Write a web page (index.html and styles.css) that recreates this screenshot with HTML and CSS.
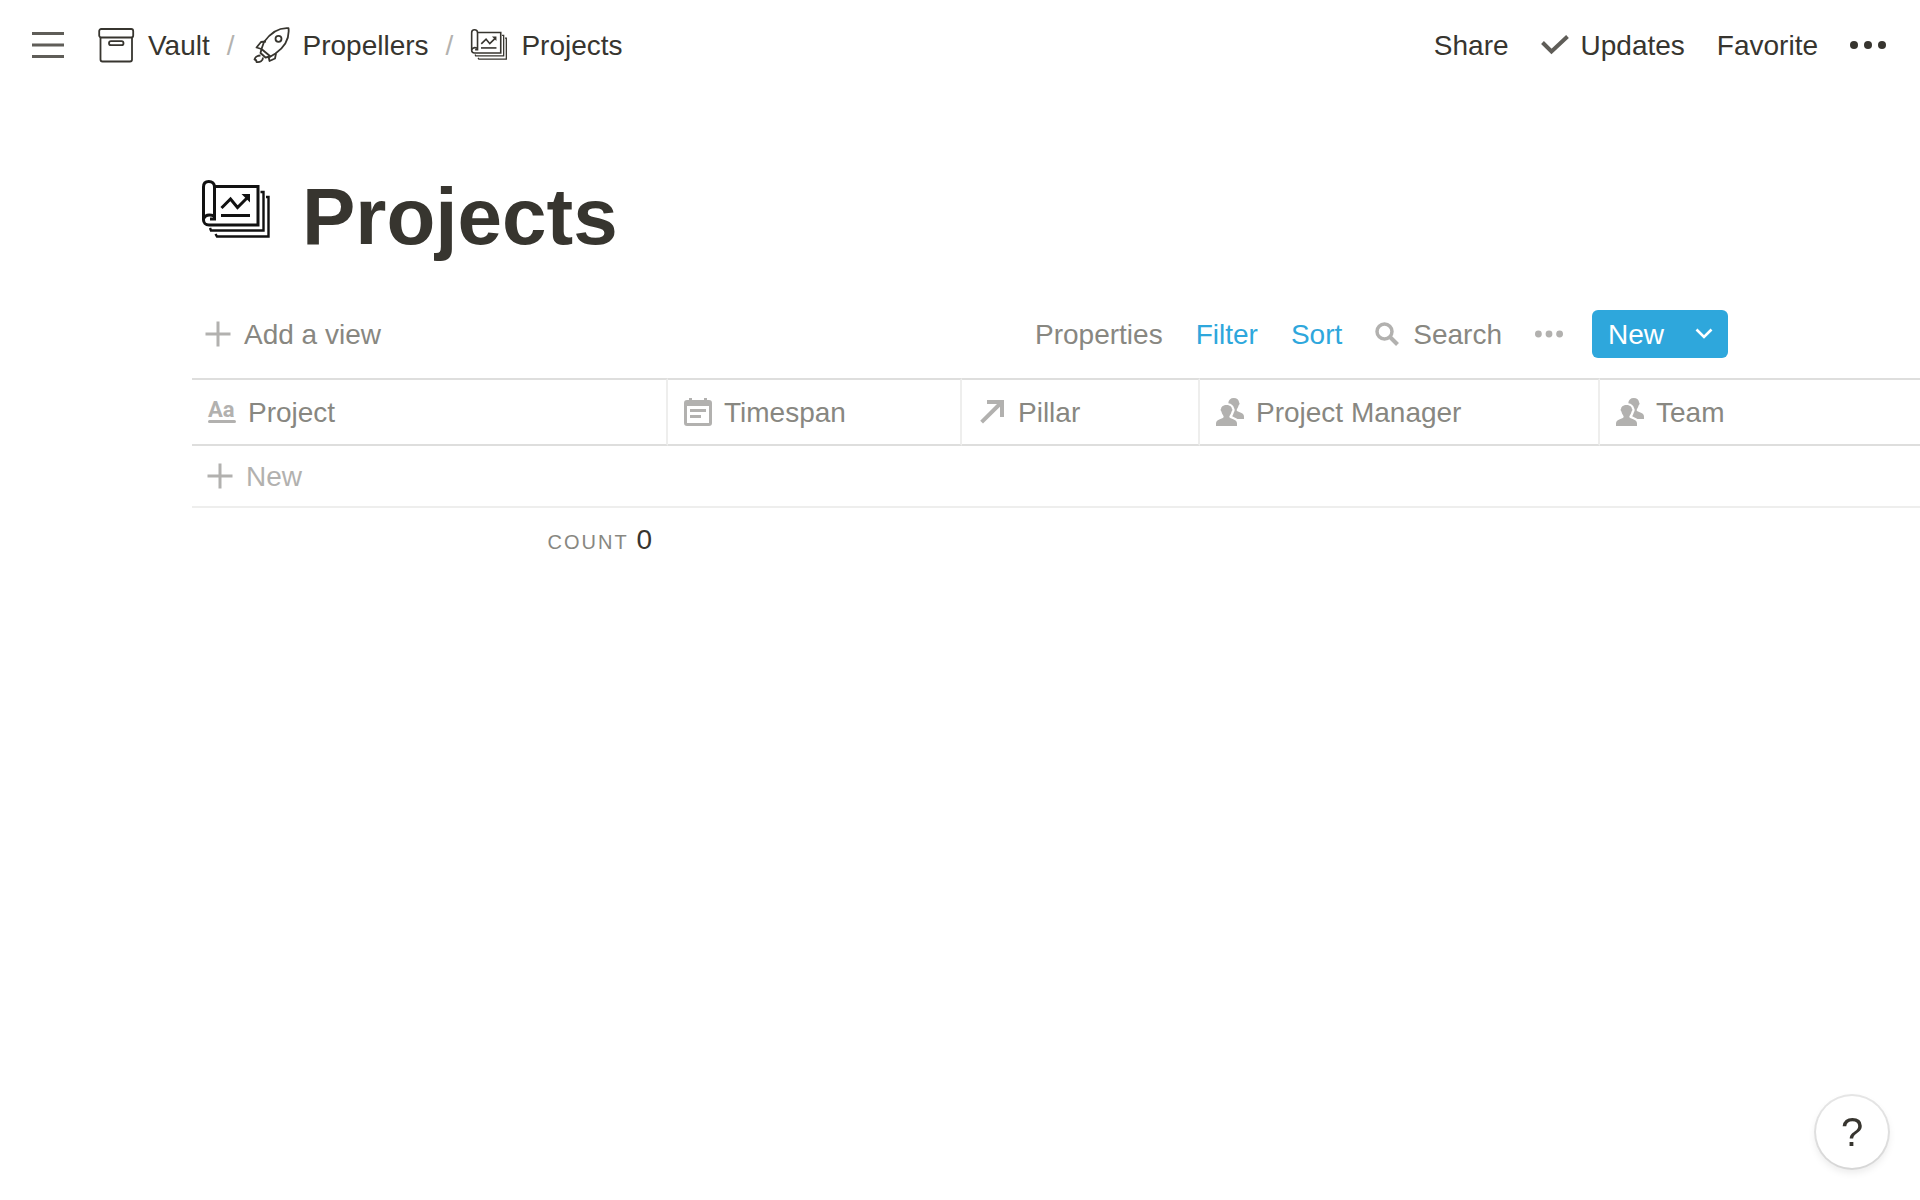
FILE: index.html
```html
<!DOCTYPE html>
<html lang="en">
<head>
  <meta charset="UTF-8" />
  <meta name="viewport" content="width=device-width, initial-scale=1" />
  <title>Projects</title>
  <link rel="stylesheet" href="styles.css">
</head>
<body>
  <!-- shared icons -->
  <svg class="sprite" aria-hidden="true">
    <symbol id="icon-projects" viewBox="0 0 68 60">
      <g fill="none" stroke="currentColor" stroke-width="3">
        <path d="M12 6.500H56V45H7C3.500 45 1.500 42.500 1.500 40V7C1.500 3.500 3.500 1.500 6.800 1.500S12.500 3.500 12.500 7V39H8"/>
        <path d="M1.500 39C3 35 7 34 12.500 36"/>
        <path d="M58.500 12H61.500V50.500H9L8 48" stroke-width="2.400"/>
        <path d="M64 17H66.500V56.500H15L13.500 54" stroke-width="2.400"/>
        <path d="M19.500 28L28.500 19L35.500 27.500L45.500 17.500"/>
        <path d="M19 35.500H48"/>
      </g>
      <path d="M39.500 14H48V22.500Z" fill="currentColor"/>
    </symbol>
    <symbol id="icon-plus" viewBox="0 0 26 26">
      <path d="M13 .5V25.500M.5 13H25.500" fill="none" stroke="currentColor" stroke-width="3"/>
    </symbol>
    <symbol id="icon-people" viewBox="0 0 28 28">
      <path d="M0 28V25.500C0 23.500 1.200 22.300 3.200 21.500L6.800 20C7.800 19.500 7.900 18.300 7.200 17.400C6.200 16.200 5.700 14.800 5.400 13.500C4.500 12.800 4.300 11.500 5.100 10.800C5.100 8.500 7.400 6.900 10.500 6.900S15.900 8.500 15.900 10.800C16.700 11.500 16.500 12.800 15.600 13.500C15.300 14.800 14.800 16.200 13.800 17.400C13.100 18.300 13.200 19.500 14.200 20L17.800 21.500C19.800 22.300 21 23.500 21 25.500V28Z"/>
      <path d="M12.300 5.200C12.500 2 14.500 0 17.700 0C21 0 23 2 23.100 4.500C23.900 5.200 23.700 6.500 22.800 7C22.400 8.700 21.700 10 21 10.900C20.500 12 20.700 12.900 21.500 13.300L25.500 15C27.500 15.900 28 17.200 28 19V21H21.500C20.600 20.200 19.700 19.800 18.600 19.400L16.200 18.300C17 16.900 17.600 15.600 17.800 14.500C18.900 13.100 18.900 11.400 18 10.100C17.500 7.500 15.500 5.700 12.300 5.200Z"/>
    </symbol>
  </svg>

  <header class="topbar">
    <button class="menu-btn" aria-label="Open sidebar">
      <svg width="32" height="28" viewBox="0 0 32 28"><path d="M0 2.500H32M0 14H32M0 25.500H32" stroke="currentColor" stroke-width="3"/></svg>
    </button>
    <nav class="breadcrumb" aria-label="Breadcrumb">
      <a class="crumb" href="#">
        <svg width="40" height="40" viewBox="0 0 40 40" fill="none" stroke="currentColor" stroke-width="1.800">
          <rect x="3.200" y="4" width="34" height="8.500" rx="2"/>
          <path d="M4.500 12.500V34.500A2 2 0 0 0 6.500 36.500H34A2 2 0 0 0 36 34.500V12.500"/>
          <rect x="13" y="16.200" width="14.500" height="4" rx="2"/>
        </svg>
        Vault
      </a>
      <span class="slash">/</span>
      <a class="crumb" href="#">
        <svg width="40" height="40" viewBox="0 0 40 40" fill="none" stroke="currentColor" stroke-width="1.800" stroke-linejoin="round">
          <path d="M37.500 3.200C38.500 12 34.500 21.500 24.500 28.500L19.500 31.500L10.500 24L13 17C19.500 8 28.500 2.500 37.500 3.200Z"/>
          <circle cx="27.500" cy="13.800" r="3"/>
          <path d="M15 16.500L10 17L5.500 22.500L10.500 24"/>
          <path d="M25 28.500L24 33.500L18.500 36L17.500 31"/>
          <path d="M10.500 24L9.500 28L14.500 32.500L19.500 31.500"/>
          <path d="M9.500 30.500C7 30.500 4 32 3.500 34.500C5 34.500 5.500 35 5.500 37C9 37.500 12 36 12 32.500"/>
        </svg>
        Propellers
      </a>
      <span class="slash">/</span>
      <a class="crumb" href="#">
        <svg width="40" height="32"><use href="#icon-projects"/></svg>
        Projects
      </a>
    </nav>
    <div class="actions">
      <button>Share</button>
      <button>
        <svg class="check" width="28" height="20" viewBox="0 0 28 20"><path d="M1.500 7.500L10.500 16.500L26.500 1.500" fill="none" stroke="currentColor" stroke-width="4"/></svg>
        Updates
      </button>
      <button>Favorite</button>
      <button aria-label="More">
        <svg width="36" height="10" viewBox="0 0 36 10" fill="currentColor"><circle cx="4" cy="5" r="4"/><circle cx="18" cy="5" r="4"/><circle cx="32" cy="5" r="4"/></svg>
      </button>
    </div>
  </header>

  <main>
    <div class="title">
      <svg width="72" height="60"><use href="#icon-projects"/></svg>
      <h1>Projects</h1>
    </div>

    <div class="toolbar">
      <button class="add-view">
        <svg class="muted" width="26" height="26"><use href="#icon-plus"/></svg>
        Add a view
      </button>
      <div class="tools">
        <button>Properties</button>
        <button class="active">Filter</button>
        <button class="active">Sort</button>
        <button>
          <svg class="muted" width="24" height="24" viewBox="0 0 24 24" fill="none" stroke="currentColor" stroke-width="3.500"><circle cx="9.500" cy="9.500" r="7.500"/><path d="M14.500 14.500L22.500 22.500" stroke-width="4"/></svg>
          Search
        </button>
        <button aria-label="More options">
          <svg class="muted" width="28" height="8" viewBox="0 0 28 8" fill="currentColor"><circle cx="3.400" cy="4" r="3.400"/><circle cx="14" cy="4" r="3.400"/><circle cx="24.600" cy="4" r="3.400"/></svg>
        </button>
      </div>
      <div class="new-group">
        <button class="new-btn">New</button>
        <button class="new-more" aria-label="New from template">
          <svg width="18" height="12" viewBox="0 0 18 12"><path d="M1.500 1.500L9 9L16.500 1.500" fill="none" stroke="currentColor" stroke-width="2.600"/></svg>
        </button>
      </div>
    </div>

    <table class="database">
      <colgroup>
        <col class="col-project">
        <col class="col-timespan">
        <col class="col-pillar">
        <col class="col-manager">
        <col class="col-team">
      </colgroup>
      <thead>
        <tr>
          <th><div class="head">
            <svg width="28" height="28" viewBox="0 0 28 28"><text x="0" y="19" class="aa">Aa</text><rect y="22" width="28" height="3" rx="1.500"/></svg>
            Project
          </div></th>
          <th><div class="head">
            <svg width="28" height="28" viewBox="0 0 28 28">
              <path fill-rule="evenodd" d="M5 2V0H8V2H20V0H23V2H25A3 3 0 0 1 28 5V25A3 3 0 0 1 25 28H3A3 3 0 0 1 0 25V5A3 3 0 0 1 3 2ZM3 8V25H25V8Z"/>
              <path d="M6 11H22V14H6ZM6 17H17V20H6Z"/>
            </svg>
            Timespan
          </div></th>
          <th><div class="head">
            <svg width="28" height="28" viewBox="0 0 28 28"><path d="M9 2H26V19H22V8.800L5 25.500L2.200 22.700L19 6H9Z"/></svg>
            Pillar
          </div></th>
          <th><div class="head">
            <svg width="28" height="28"><use href="#icon-people"/></svg>
            Project Manager
          </div></th>
          <th><div class="head">
            <svg width="28" height="28"><use href="#icon-people"/></svg>
            Team
          </div></th>
        </tr>
      </thead>
      <tbody>
        <tr>
          <td colspan="5">
            <button class="new-row">
              <svg width="26" height="26"><use href="#icon-plus"/></svg>
              New
            </button>
          </td>
        </tr>
      </tbody>
      <tfoot>
        <tr>
          <td class="count"><span class="count-label">Count</span> 0</td>
        </tr>
      </tfoot>
    </table>
  </main>

  <button class="help-btn" aria-label="Help">?</button>
</body>
</html>
```

FILE: styles.css
```css
* {
  box-sizing: border-box;
}
body {
  margin: 0;
  min-height: 100vh;
  background-color: #fff;
  color: #37352f;
  font-family: "Liberation Sans", Arial, sans-serif;
  font-size: 28px;
  line-height: 33px;
  overflow-x: hidden;
}
button {
  display: flex;
  align-items: center;
  padding: 0;
  border: none;
  background: none;
  color: inherit;
  font: inherit;
  white-space: nowrap;
  cursor: pointer;
}
svg {
  display: block;
  flex-shrink: 0;
}
.sprite {
  position: absolute;
  width: 0;
  height: 0;
}

/* top bar */
.topbar {
  display: flex;
  align-items: center;
  height: 90px;
  padding: 0 34px 0 32px;
}
.menu-btn {
  color: #5f5d58;
  margin-right: 32px;
}
.breadcrumb {
  display: flex;
  align-items: center;
}
.crumb {
  display: flex;
  align-items: center;
  gap: 12px;
  color: inherit;
  text-decoration: none;
}
.slash {
  margin: 0 16px 0 17px;
  color: #b3b2af;
}
.actions {
  display: flex;
  gap: 32px;
  margin-left: auto;
}
.actions button {
  gap: 12px;
}
.check {
  color: #5f5d58;
}

/* page title */
.title {
  display: flex;
  align-items: flex-start;
  gap: 30px;
  padding: 79px 200px 0;
}
.title svg {
  margin-top: 11px;
  color: #111;
}
h1 {
  margin: 0;
  font-size: 80px;
  line-height: 96px;
}

/* view toolbar */
.toolbar {
  display: flex;
  align-items: center;
  margin: 45px 192px 20px;
  padding-left: 13px;
  color: #888781;
}
.muted {
  color: #b2b1af;
}
.add-view {
  gap: 13px;
}
.tools {
  display: flex;
  gap: 33px;
  margin-left: auto;
}
.tools button {
  gap: 14px;
}
.tools .active {
  color: #2ea7dc;
}
.new-group {
  display: flex;
  height: 48px;
  margin-left: 29px;
  border-radius: 6px;
  background-color: #2ea7dc;
  color: #fff;
}
.new-btn {
  padding: 0 16px;
}
.new-more {
  padding: 0 15px;
}

/* database table */
.database {
  width: calc(100% - 192px);
  margin-left: 192px;
  table-layout: fixed;
  border-collapse: separate;
  border-spacing: 0;
}
.col-project {
  width: 476px;
}
.col-timespan {
  width: 294px;
}
.col-pillar {
  width: 238px;
}
.col-manager {
  width: 400px;
}
.database th {
  height: 68px;
  padding: 0 14px 0 16px;
  border-top: 2px solid #dededd;
  border-bottom: 2px solid #dededd;
  border-right: 2px solid #eeeeed;
  color: #888781;
  font-weight: normal;
}
.database th:last-child {
  border-right: none;
}
.head {
  display: flex;
  align-items: center;
  gap: 12px;
  white-space: nowrap;
}
.head svg {
  fill: #b2b1af;
  color: #b2b1af;
  overflow: visible;
}
.aa {
  font-family: Roboto, sans-serif;
  font-size: 22px;
  font-weight: bold;
}
.database td {
  padding: 0;
}
.database tbody td {
  height: 62px;
  border-bottom: 2px solid #eeeeed;
}
.new-row {
  gap: 13px;
  width: 100%;
  height: 60px;
  padding-left: 15px;
  color: #b2b1af;
}
.database .count {
  height: 66px;
  padding-right: 16px;
  text-align: right;
}
.count-label {
  color: #888781;
  font-size: 20px;
  letter-spacing: 2px;
  text-transform: uppercase;
}

/* help button */
.help-btn {
  position: fixed;
  right: 32px;
  bottom: 32px;
  justify-content: center;
  width: 72px;
  height: 72px;
  border-radius: 50%;
  background-color: #fff;
  box-shadow: 0 0 0 2px rgba(15, 15, 15, 0.1), 0 4px 8px rgba(15, 15, 15, 0.1);
  font-size: 40px;
}
```
